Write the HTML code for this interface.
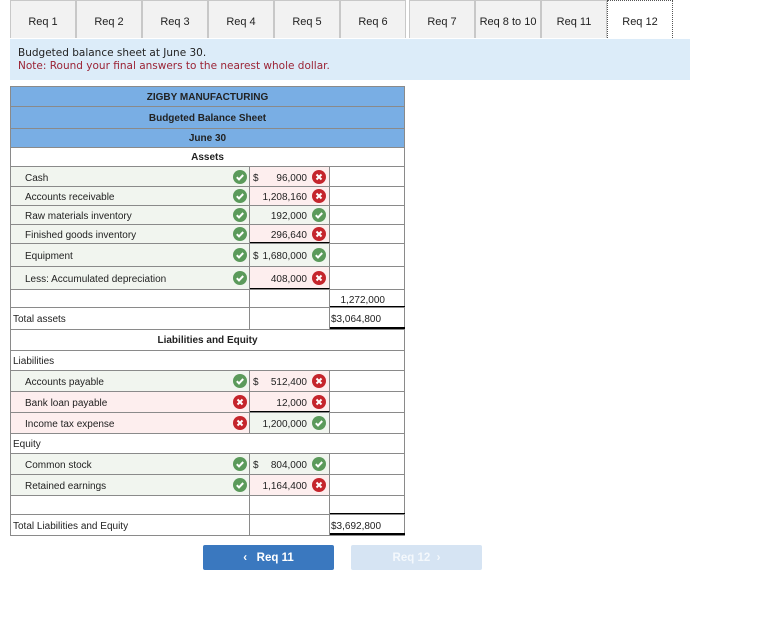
<!DOCTYPE html>
<html><head><meta charset="utf-8"><style>
body{margin:0;width:770px;height:628px;background:#fff;font-family:"Liberation Sans",Arial,sans-serif;position:relative;overflow:hidden}
.tab{position:absolute;top:0;height:38px;background:#f2f2f2;border:1px solid #c8c8c8;border-bottom:none;font-size:11px;color:#222;text-align:center;line-height:42px;box-sizing:border-box}
.tab.act{background:#fff;border:1px dotted #555;border-bottom:none}
.info{position:absolute;left:10px;top:39px;width:680px;height:41px;background:#dcecf9;font-family:"DejaVu Sans",sans-serif;font-size:10.5px;line-height:13px;padding:8px 0 0 8px;box-sizing:border-box;color:#222}
.info .n{color:#9b2335}
.r{position:absolute;left:10px;width:395px;box-sizing:border-box;border:1px solid #8a8a8a;border-top:none;font-size:10px;color:#222}
.hd{background:#79aee4;text-align:center;font-weight:bold;font-size:10px}
.c{position:absolute;top:0;bottom:0;box-sizing:border-box;padding-top:2px}
.l{left:0;width:239px;border-right:1px solid #8a8a8a;padding-left:14px}
.v{left:239px;width:80px;border-right:1px solid #8a8a8a;text-align:right;padding-right:22px}
.t{left:319px;width:75px}
.g{background:#f1f5ef}.p{background:#fdeeee}
.ic{position:absolute;width:14px;height:14px;top:50%;margin-top:-7px}
.btn{position:absolute;top:545px;height:25px;width:131px;border-radius:2px;color:#fff;font-weight:bold;font-size:11.5px;text-align:center;line-height:26px}
</style></head><body>
<div class="tab" style="left:10px;width:66px">Req 1</div>
<div class="tab" style="left:76px;width:66px">Req 2</div>
<div class="tab" style="left:142px;width:66px">Req 3</div>
<div class="tab" style="left:208px;width:66px">Req 4</div>
<div class="tab" style="left:274px;width:66px">Req 5</div>
<div class="tab" style="left:340px;width:66px">Req 6</div>
<div class="tab" style="left:409px;width:66px">Req 7</div>
<div class="tab" style="left:475px;width:66px">Req 8 to 10</div>
<div class="tab" style="left:541px;width:66px">Req 11</div>
<div class="tab act" style="left:607px;width:66px">Req 12</div>
<div class="info">Budgeted balance sheet at June 30.<br><span class="n">Note: Round your final answers to the nearest whole dollar.</span></div>

<svg width="0" height="0" style="position:absolute"><defs>
<g id="ok"><circle cx="7" cy="7" r="7" fill="#5b9a5b"/><path d="M3.8 7.2l2.2 2.2 4.2-4.4" stroke="#fff" stroke-width="2" fill="none"/></g>
<g id="no"><circle cx="7" cy="7" r="7" fill="#c5252c"/><path d="M4.5 4.5l5 5M9.5 4.5l-5 5" stroke="#fff" stroke-width="2"/></g>
</defs></svg>

<div class="r hd" style="top:86px;height:21px;border-top:1px solid #8a8a8a;line-height:22px">ZIGBY MANUFACTURING</div>
<div class="r hd" style="top:107px;height:22px;line-height:23px">Budgeted Balance Sheet</div>
<div class="r hd" style="top:129px;height:19px;line-height:20px">June 30</div>
<div class="r" style="top:148px;height:19px;line-height:20px;text-align:center;font-weight:bold">Assets</div>

<div class="r" style="top:167px;height:20px;line-height:19px"><div class="c l g">Cash<svg class="ic" style="left:222px"><use href="#ok"/></svg></div><div class="c v p"><span style="position:absolute;left:3px">$</span>96,000<svg class="ic" style="left:62px"><use href="#no"/></svg></div><div class="c t"></div></div>
<div class="r" style="top:187px;height:19px;line-height:18px"><div class="c l g">Accounts receivable<svg class="ic" style="left:222px"><use href="#ok"/></svg></div><div class="c v p">1,208,160<svg class="ic" style="left:62px"><use href="#no"/></svg></div><div class="c t"></div></div>
<div class="r" style="top:206px;height:19px;line-height:18px"><div class="c l g">Raw materials inventory<svg class="ic" style="left:222px"><use href="#ok"/></svg></div><div class="c v g">192,000<svg class="ic" style="left:62px"><use href="#ok"/></svg></div><div class="c t"></div></div>
<div class="r" style="top:225px;height:19px;line-height:18px"><div class="c l g">Finished goods inventory<svg class="ic" style="left:222px"><use href="#ok"/></svg></div><div class="c v p" style="border-bottom:1px solid #000">296,640<svg class="ic" style="left:62px"><use href="#no"/></svg></div><div class="c t"></div></div>
<div class="r" style="top:244px;height:23px;line-height:21px"><div class="c l g">Equipment<svg class="ic" style="left:222px"><use href="#ok"/></svg></div><div class="c v g"><span style="position:absolute;left:3px">$</span>1,680,000<svg class="ic" style="left:62px"><use href="#ok"/></svg></div><div class="c t"></div></div>
<div class="r" style="top:267px;height:23px;line-height:21px"><div class="c l g">Less: Accumulated depreciation<svg class="ic" style="left:222px"><use href="#ok"/></svg></div><div class="c v p" style="border-bottom:1px solid #000">408,000<svg class="ic" style="left:62px"><use href="#no"/></svg></div><div class="c t"></div></div>
<div class="r" style="top:290px;height:18px;line-height:17px"><div class="c l"></div><div class="c v"></div><div class="c t" style="text-align:right;padding-right:20px;border-bottom:1px solid #000">1,272,000</div></div>
<div class="r" style="top:308px;height:22px;line-height:20px"><div class="c l" style="padding-left:2px">Total assets</div><div class="c v"></div><div class="c t" style="padding-left:1px;border-bottom:2px solid #000">$3,064,800</div></div>
<div class="r" style="top:330px;height:21px;line-height:22px;text-align:center;font-weight:bold">Liabilities and Equity</div>
<div class="r" style="top:351px;height:20px;line-height:20px;padding-left:2px;padding-top:1px">Liabilities</div>
<div class="r" style="top:371px;height:21px;line-height:20px"><div class="c l g">Accounts payable<svg class="ic" style="left:222px"><use href="#ok"/></svg></div><div class="c v p"><span style="position:absolute;left:3px">$</span>512,400<svg class="ic" style="left:62px"><use href="#no"/></svg></div><div class="c t"></div></div>
<div class="r" style="top:392px;height:21px;line-height:20px"><div class="c l p">Bank loan payable<svg class="ic" style="left:222px"><use href="#no"/></svg></div><div class="c v p" style="border-bottom:1px solid #000">12,000<svg class="ic" style="left:62px"><use href="#no"/></svg></div><div class="c t"></div></div>
<div class="r" style="top:413px;height:21px;line-height:20px"><div class="c l p">Income tax expense<svg class="ic" style="left:222px"><use href="#no"/></svg></div><div class="c v g">1,200,000<svg class="ic" style="left:62px"><use href="#ok"/></svg></div><div class="c t"></div></div>
<div class="r" style="top:434px;height:20px;line-height:20px;padding-left:2px;padding-top:1px">Equity</div>
<div class="r" style="top:454px;height:21px;line-height:20px"><div class="c l g">Common stock<svg class="ic" style="left:222px"><use href="#ok"/></svg></div><div class="c v g"><span style="position:absolute;left:3px">$</span>804,000<svg class="ic" style="left:62px"><use href="#ok"/></svg></div><div class="c t"></div></div>
<div class="r" style="top:475px;height:21px;line-height:20px"><div class="c l g">Retained earnings<svg class="ic" style="left:222px"><use href="#ok"/></svg></div><div class="c v p">1,164,400<svg class="ic" style="left:62px"><use href="#no"/></svg></div><div class="c t"></div></div>
<div class="r" style="top:496px;height:19px"><div class="c l"></div><div class="c v"></div><div class="c t" style="border-bottom:1px solid #000"></div></div>
<div class="r" style="top:515px;height:21px;line-height:19px"><div class="c l" style="padding-left:2px">Total Liabilities and Equity</div><div class="c v"></div><div class="c t" style="padding-left:1px;border-bottom:2px solid #000">$3,692,800</div></div>

<div class="btn" style="left:203px;background:#3a78bf">&lsaquo;&nbsp;&nbsp; Req 11</div>
<div class="btn" style="left:351px;background:#d6e4f3;color:#f4f8fc">Req 12 &nbsp;&rsaquo;</div>
</body></html>
